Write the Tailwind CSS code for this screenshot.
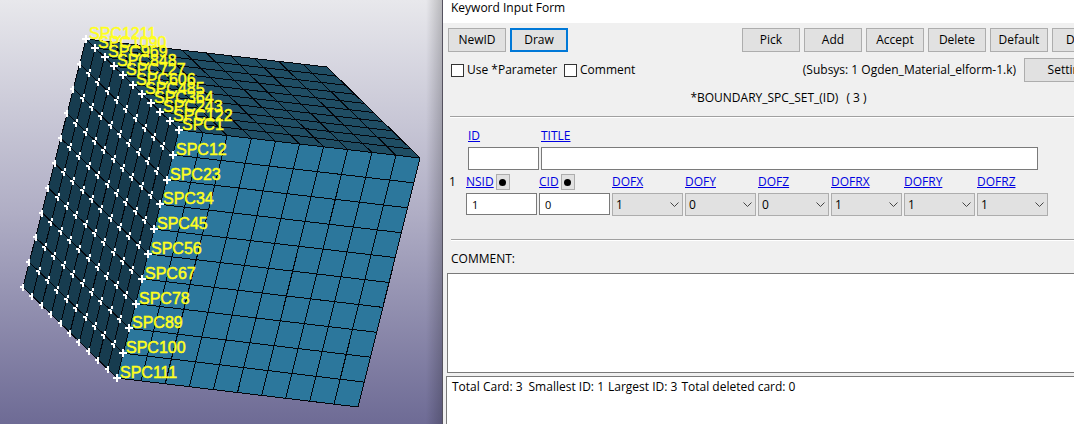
<!DOCTYPE html>
<html lang="en">
<head>
<meta charset="utf-8">
<meta name="viewport" content="width=device-width, initial-scale=1">
<title>Keyword Input Form</title>
<script src="https://cdn.jsdelivr.net/npm/@tailwindcss/browser@4"></script>
</head>
<body class="flex h-screen overflow-hidden bg-[#f0f0f0] font-['Open_Sans','Noto_Sans',sans-serif] text-xs text-black">

<!-- 3D model viewport -->
<main class="relative shrink-0 basis-[443px] overflow-hidden border-r border-[#55525f] bg-linear-to-b from-[#e8e8ec] via-[#b0aec5] to-[#6e6b95]">
  <svg id="model" class="block" width="442" height="424" viewBox="0 0 442 424" role="img" aria-label="Meshed cube with boundary nodes">
    <polygon points="86,39 179,130 420,158 327,67" fill="#1f4d63"/>
    <polygon points="86,39 179,130 117,378 23,287" fill="#173c4f"/>
    <polygon points="179,130 420,158 358,407 117,378" fill="#2c779c"/>
    <g id="mesh" stroke="#03060c" stroke-width="1" fill="none" shape-rendering="crispEdges"></g>
    <g id="nodes" stroke="#ffffff" stroke-width="2" fill="none"></g>
    <g id="labels" fill="#ffff1e" stroke="#ffff1e" stroke-width="0.5" font-family="Liberation Sans, sans-serif" font-size="16"></g>
  </svg>
  <div class="absolute inset-y-0 right-0 w-4 bg-linear-to-r from-transparent to-black/20"></div>
</main>

<!-- Keyword dialog -->
<section class="flex min-w-0 flex-1 flex-col overflow-hidden">
  <header class="h-[23px] shrink-0 bg-white pl-2 leading-4"><h1>Keyword Input Form</h1></header>

  <form class="-mr-10 flex flex-1 flex-col">
    <div class="mt-[5px] flex h-6 justify-between pr-1 pl-[5px]">
      <div class="flex gap-1">
        <button type="button" class="w-[58px] border border-[#adadad] bg-[#e1e1e1]">NewID</button>
        <button type="button" class="w-[58px] border-2 border-[#0078d7] bg-[#e1e1e1]">Draw</button>
      </div>
      <div class="flex gap-1">
        <button type="button" class="w-[58px] border border-[#adadad] bg-[#e1e1e1]">Pick</button>
        <button type="button" class="w-[58px] border border-[#adadad] bg-[#e1e1e1]">Add</button>
        <button type="button" class="w-[58px] border border-[#adadad] bg-[#e1e1e1]">Accept</button>
        <button type="button" class="w-[58px] border border-[#adadad] bg-[#e1e1e1]">Delete</button>
        <button type="button" class="w-[58px] border border-[#adadad] bg-[#e1e1e1]">Default</button>
        <button type="button" class="w-[58px] border border-[#adadad] bg-[#e1e1e1]">Done</button>
      </div>
    </div>

    <div class="mt-1.5 flex h-6 items-center justify-between pr-1 pl-2">
      <div class="flex">
        <label class="flex w-[113px] items-center gap-[3px]"><input type="checkbox" class="size-[13px] appearance-none border border-[#333] bg-white">Use *Parameter</label>
        <label class="flex items-center gap-[3px]"><input type="checkbox" class="size-[13px] appearance-none border border-[#333] bg-white">Comment</label>
      </div>
      <div class="flex h-6 items-center gap-2">
        <span>(Subsys: 1 Ogden_Material_elform-1.k)</span>
        <button type="button" class="h-6 w-[86px] border border-[#adadad] bg-[#e1e1e1]">Setting</button>
      </div>
    </div>

    <h2 class="mt-1.5 flex h-5 items-center justify-center gap-2"><span>*BOUNDARY_SPC_SET_(ID)</span><span>( 3 )</span></h2>
    <hr class="mt-2 ml-[7px] h-0.5 border-t border-b border-t-[#a0a0a0] border-b-white">

    <div class="mt-2 ml-[25px] flex gap-0.5">
      <div class="flex w-[71px] flex-col gap-px">
        <a href="#id" id="l-id" class="flex h-5 items-center self-start text-[#0000e0] underline">ID</a>
        <input id="id" aria-labelledby="l-id" type="text" class="h-[23px] w-full border border-[#7a7a7a] bg-white px-1.5">
      </div>
      <div class="flex w-[497px] flex-col gap-px">
        <a href="#title" id="l-title" class="flex h-5 items-center self-start text-[#0000e0] underline">TITLE</a>
        <input id="title" aria-labelledby="l-title" type="text" class="h-[23px] w-full border border-[#7a7a7a] bg-white px-1.5">
      </div>
    </div>

    <div class="mt-1 ml-1.5 flex">
      <span class="w-[17px] leading-4">1</span>
      <div class="flex gap-0.5">
        <div class="w-[71px]">
          <div class="flex h-[17px] items-start gap-0.5"><a href="#nsid" id="l-nsid" class="text-[#0000e0] underline">NSID</a><button type="button" aria-label="Select NSID" class="flex h-4 w-3.5 items-center justify-center border border-[#adadad] bg-[#e1e1e1]"><span class="size-[7px] rounded-full bg-black"></span></button></div>
          <input id="nsid" aria-labelledby="l-nsid" type="text" value="1" class="mt-0.5 block h-[22px] w-full border border-[#7a7a7a] bg-white px-[5px] text-[11px]">
        </div>
        <div class="w-[71px]">
          <div class="flex h-[17px] items-start gap-0.5"><a href="#cid" id="l-cid" class="text-[#0000e0] underline">CID</a><button type="button" aria-label="Select CID" class="flex h-4 w-3.5 items-center justify-center border border-[#adadad] bg-[#e1e1e1]"><span class="size-[7px] rounded-full bg-black"></span></button></div>
          <input id="cid" aria-labelledby="l-cid" type="text" value="0" class="mt-0.5 block h-[22px] w-full border border-[#7a7a7a] bg-white px-[5px] text-[11px]">
        </div>
        <div class="w-[71px]">
          <div class="flex h-[17px] items-start"><a href="#dofx" id="l-dofx" class="text-[#0000e0] underline">DOFX</a></div>
          <div class="relative mt-0.5"><select id="dofx" aria-labelledby="l-dofx" class="block h-[23px] w-full appearance-none border border-[#adadad] bg-[#e1e1e1] px-[3px]"><option>1</option><option>0</option></select><svg class="pointer-events-none absolute top-[9px] right-1" width="9" height="6" viewBox="0 0 9 6" fill="none" stroke="#444"><path d="M.5 .5l4 4 4-4"/></svg></div>
        </div>
        <div class="w-[71px]">
          <div class="flex h-[17px] items-start"><a href="#dofy" id="l-dofy" class="text-[#0000e0] underline">DOFY</a></div>
          <div class="relative mt-0.5"><select id="dofy" aria-labelledby="l-dofy" class="block h-[23px] w-full appearance-none border border-[#adadad] bg-[#e1e1e1] px-[3px]"><option>0</option><option>1</option></select><svg class="pointer-events-none absolute top-[9px] right-1" width="9" height="6" viewBox="0 0 9 6" fill="none" stroke="#444"><path d="M.5 .5l4 4 4-4"/></svg></div>
        </div>
        <div class="w-[71px]">
          <div class="flex h-[17px] items-start"><a href="#dofz" id="l-dofz" class="text-[#0000e0] underline">DOFZ</a></div>
          <div class="relative mt-0.5"><select id="dofz" aria-labelledby="l-dofz" class="block h-[23px] w-full appearance-none border border-[#adadad] bg-[#e1e1e1] px-[3px]"><option>0</option><option>1</option></select><svg class="pointer-events-none absolute top-[9px] right-1" width="9" height="6" viewBox="0 0 9 6" fill="none" stroke="#444"><path d="M.5 .5l4 4 4-4"/></svg></div>
        </div>
        <div class="w-[71px]">
          <div class="flex h-[17px] items-start"><a href="#dofrx" id="l-dofrx" class="text-[#0000e0] underline">DOFRX</a></div>
          <div class="relative mt-0.5"><select id="dofrx" aria-labelledby="l-dofrx" class="block h-[23px] w-full appearance-none border border-[#adadad] bg-[#e1e1e1] px-[3px]"><option>1</option><option>0</option></select><svg class="pointer-events-none absolute top-[9px] right-1" width="9" height="6" viewBox="0 0 9 6" fill="none" stroke="#444"><path d="M.5 .5l4 4 4-4"/></svg></div>
        </div>
        <div class="w-[71px]">
          <div class="flex h-[17px] items-start"><a href="#dofry" id="l-dofry" class="text-[#0000e0] underline">DOFRY</a></div>
          <div class="relative mt-0.5"><select id="dofry" aria-labelledby="l-dofry" class="block h-[23px] w-full appearance-none border border-[#adadad] bg-[#e1e1e1] px-[3px]"><option>1</option><option>0</option></select><svg class="pointer-events-none absolute top-[9px] right-1" width="9" height="6" viewBox="0 0 9 6" fill="none" stroke="#444"><path d="M.5 .5l4 4 4-4"/></svg></div>
        </div>
        <div class="w-[71px]">
          <div class="flex h-[17px] items-start"><a href="#dofrz" id="l-dofrz" class="text-[#0000e0] underline">DOFRZ</a></div>
          <div class="relative mt-0.5"><select id="dofrz" aria-labelledby="l-dofrz" class="block h-[23px] w-full appearance-none border border-[#adadad] bg-[#e1e1e1] px-[3px]"><option>1</option><option>0</option></select><svg class="pointer-events-none absolute top-[9px] right-1" width="9" height="6" viewBox="0 0 9 6" fill="none" stroke="#444"><path d="M.5 .5l4 4 4-4"/></svg></div>
        </div>
      </div>
    </div>

    <hr class="mt-[23px] ml-2 h-0.5 border-t border-b border-t-[#a0a0a0] border-b-white">
    <label for="comment" class="mt-2 ml-2 flex h-5 items-center">COMMENT:</label>
    <textarea id="comment" class="mt-1 ml-1 h-[100px] resize-none border border-[#7a7a7a] bg-white p-1"></textarea>
    <output class="mt-[3px] ml-[3px] flex flex-1 items-start gap-1 border border-b-0 border-[#7a7a7a] bg-white pl-[5px] leading-5">
      <span class="mr-0.5">Total Card: 3</span><span>Smallest ID: 1</span><span>Largest ID: 3</span><span>Total deleted card: 0</span>
    </output>
  </form>
</section>

<script>
  const NS = 'http://www.w3.org/2000/svg';
  const A = [86, 39], B = [179, 130], C = [420, 158], D = [327, 67], E = [23, 287], F = [117, 378], G = [358, 407];
  const N = 10;
  const mix = (p, q, t) => [p[0] + (q[0] - p[0]) * t, p[1] + (q[1] - p[1]) * t];
  const path = (group, d) => {
    const el = document.createElementNS(NS, 'path');
    el.setAttribute('d', d);
    document.getElementById(group).appendChild(el);
  };
  // Mesh lines of one face, corners given in order round it.
  const face = (p, q, r, s) => {
    for (let i = 0; i <= N; i++) {
      const t = i / N;
      path('mesh', `M${mix(p, q, t)}L${mix(s, r, t)}`);
      path('mesh', `M${mix(p, s, t)}L${mix(q, r, t)}`);
    }
  };
  face(A, B, C, D);
  face(A, B, F, E);
  face(B, C, G, F);

  const label = (p, id) => {
    const el = document.createElementNS(NS, 'text');
    el.setAttribute('x', Math.round(p[0]) + 3);
    el.setAttribute('y', Math.round(p[1]));
    el.textContent = 'SPC' + id;
    document.getElementById('labels').appendChild(el);
  };
  // Constrained nodes: i runs from the front edge to the back, j downwards.
  for (let i = 0; i <= N; i++) {
    for (let j = 0; j <= N; j++) {
      const p = mix(mix(B, A, i / N), mix(F, E, i / N), j / N);
      const x = Math.round(p[0]), y = Math.round(p[1]);
      if (i === 0 || j === 0) path('nodes', `M${x - 4} ${y}h8M${x} ${y - 4}v8`);
      else if (i === N || j === N) path('nodes', `M${x - 3} ${y}h4M${x} ${y - 3}v7`);
      else path('nodes', `M${x - 3} ${y}h3M${x + 1} ${y - 4}v3M${x} ${y}v4`);
      if (i === 0 || j === 0) label(p, 1 + i * 121 + j * 11);
    }
  }
</script>
</body>
</html>
